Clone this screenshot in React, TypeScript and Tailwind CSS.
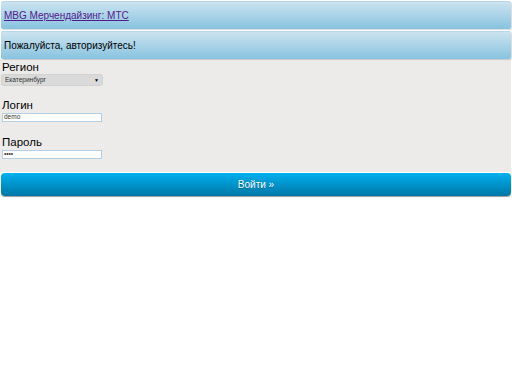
export default function App() {
  return (
    <div className="h-[384px] w-[512px] bg-white font-['Liberation_Sans',Arial,sans-serif] text-black">
      <div className="flex h-[28px] w-[510px] translate-x-[1px] translate-y-[1px] items-center rounded-[2px] border-t border-[#b9d6e6] bg-gradient-to-b from-[#cbe3ef] to-[#87c3e0] px-[3px] shadow-[1px_1px_1px_rgba(0,0,0,0.15)]">
        <a href="#" className="text-[10px] text-[#551a8b] underline">
          MBG Мерчендайзинг: МТС
        </a>
      </div>
      <div className="mt-[2px] flex h-[28px] w-[510px] translate-x-[1px] translate-y-[1px] items-center rounded-[2px] border-t border-[#b9d6e6] bg-gradient-to-b from-[#cbe3ef] to-[#87c3e0] px-[3px] shadow-[1px_1px_1px_rgba(0,0,0,0.15)]">
        <span className="text-[10px]">Пожалуйста, авторизуйтесь!</span>
      </div>
      <div className="mt-[1px] w-[511px] bg-[#ecebe9] px-[2px] pb-[13px] pt-[1px]">
        <div className="text-[11.5px] leading-[14px]">Регион</div>
        <div className="mt-[1px] flex h-[10px] w-[100px] items-center justify-between rounded-[2px] bg-[#dadada] px-[3px] shadow-[0_0_0_1px_#d2d2d2]">
          <span className="text-[6.5px] leading-none text-[#333]">Екатеринбург</span>
          <span className="text-[5px] leading-none">▼</span>
        </div>
        <div className="mt-[13px] text-[11.5px] leading-[14px]">Логин</div>
        <div className="mt-[1px] flex h-[9px] w-[100px] items-center border border-[#b5cfe6] bg-white px-[1px]">
          <span className="text-[6.5px] leading-none text-[#333]">demo</span>
        </div>
        <div className="mt-[13px] text-[11.5px] leading-[14px]">Пароль</div>
        <div className="mt-[1px] flex h-[9px] w-[100px] items-center border border-[#b5cfe6] bg-white px-[1px]">
          <span className="text-[6.5px] leading-none text-[#333]">••••</span>
        </div>
      </div>
      <button className="mt-[1px] flex h-[23px] w-[510px] translate-x-[1px] items-center justify-center rounded-[4px] bg-gradient-to-b from-[#00b0f0] to-[#0077a6] text-[10px] text-white shadow-[0_1px_1px_rgba(0,0,0,0.4)] [text-shadow:0_1px_0_rgba(0,0,0,0.3)]">
        Войти »
      </button>
    </div>
  );
}
